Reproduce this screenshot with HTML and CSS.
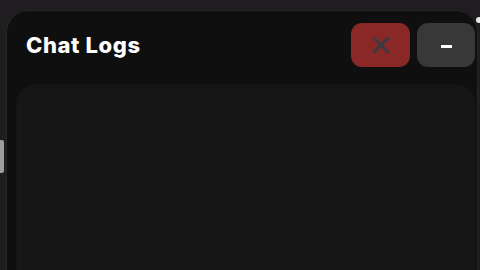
FILE: index.html
```html
<!DOCTYPE html>
<html>
<head>
<meta charset="utf-8">
<link rel="stylesheet" href="styles.css">
</head>
<body>
<div class="side-thumb"></div>
<div class="corner-dot"></div>
<div class="window">
  <div class="header">
    <h1 class="title">Chat Logs</h1>
    <div class="actions">
      <button class="btn btn-close" aria-label="Close">
        <svg width="18" height="18" viewBox="0 0 18 18"><path d="M2 2 L16 16 M16 2 L2 16" stroke="#3b3a42" stroke-width="3" stroke-linecap="round"/></svg>
      </button>
      <button class="btn btn-min" aria-label="Minimize"><span class="minus"></span></button>
    </div>
  </div>
  <div class="panel"></div>
</div>
</body>
</html>
```

FILE: styles.css
```css
html, body {
  margin: 0;
  padding: 0;
  width: 480px;
  height: 270px;
  overflow: hidden;
  background: #1f1d1f;
  font-family: "Inter", "Liberation Sans", sans-serif;
}
body {
  position: relative;
  padding-top: 10px;
  padding-left: 6px;
  box-sizing: border-box;
}
.side-thumb {
  position: absolute;
  left: 0;
  top: 140px;
  width: 4px;
  height: 33px;
  background: #9d9d9d;
  border-radius: 0 2px 2px 0;
}
.corner-dot {
  position: absolute;
  left: 476px;
  top: 17px;
  width: 6px;
  height: 6px;
  border-radius: 50%;
  background: #e8e8e8;
}
.window {
  width: 472px;
  height: 260px;
  box-sizing: border-box;
  background: #100f10;
  border: 1px solid #262426;
  border-bottom: none;
  border-radius: 22px 22px 0 0;
  padding: 12px 2px 0 10px;
  display: flex;
  flex-direction: column;
}
.header {
  display: flex;
  align-items: center;
  justify-content: space-between;
  padding-left: 9px;
}
.title {
  margin: 0;
  color: #ffffff;
  font-size: 22px;
  font-weight: 800;
  letter-spacing: 0.6px;
}
.actions {
  display: flex;
  gap: 7px;
}
.btn {
  border: none;
  padding: 0;
  height: 44px;
  border-radius: 11px;
  display: flex;
  align-items: center;
  justify-content: center;
}
.btn-close {
  width: 59px;
  background: #8a2828;
}
.btn-min {
  width: 58px;
  background: #383838;
}
.minus {
  display: block;
  width: 11px;
  height: 3px;
  background: #ffffff;
  margin-top: 2px;
}
.panel {
  margin-top: 18px;
  flex: 1;
  background: #161616;
  border-radius: 18px 18px 0 0;
  box-shadow: 0 0 0 1px #131313;
}
```
